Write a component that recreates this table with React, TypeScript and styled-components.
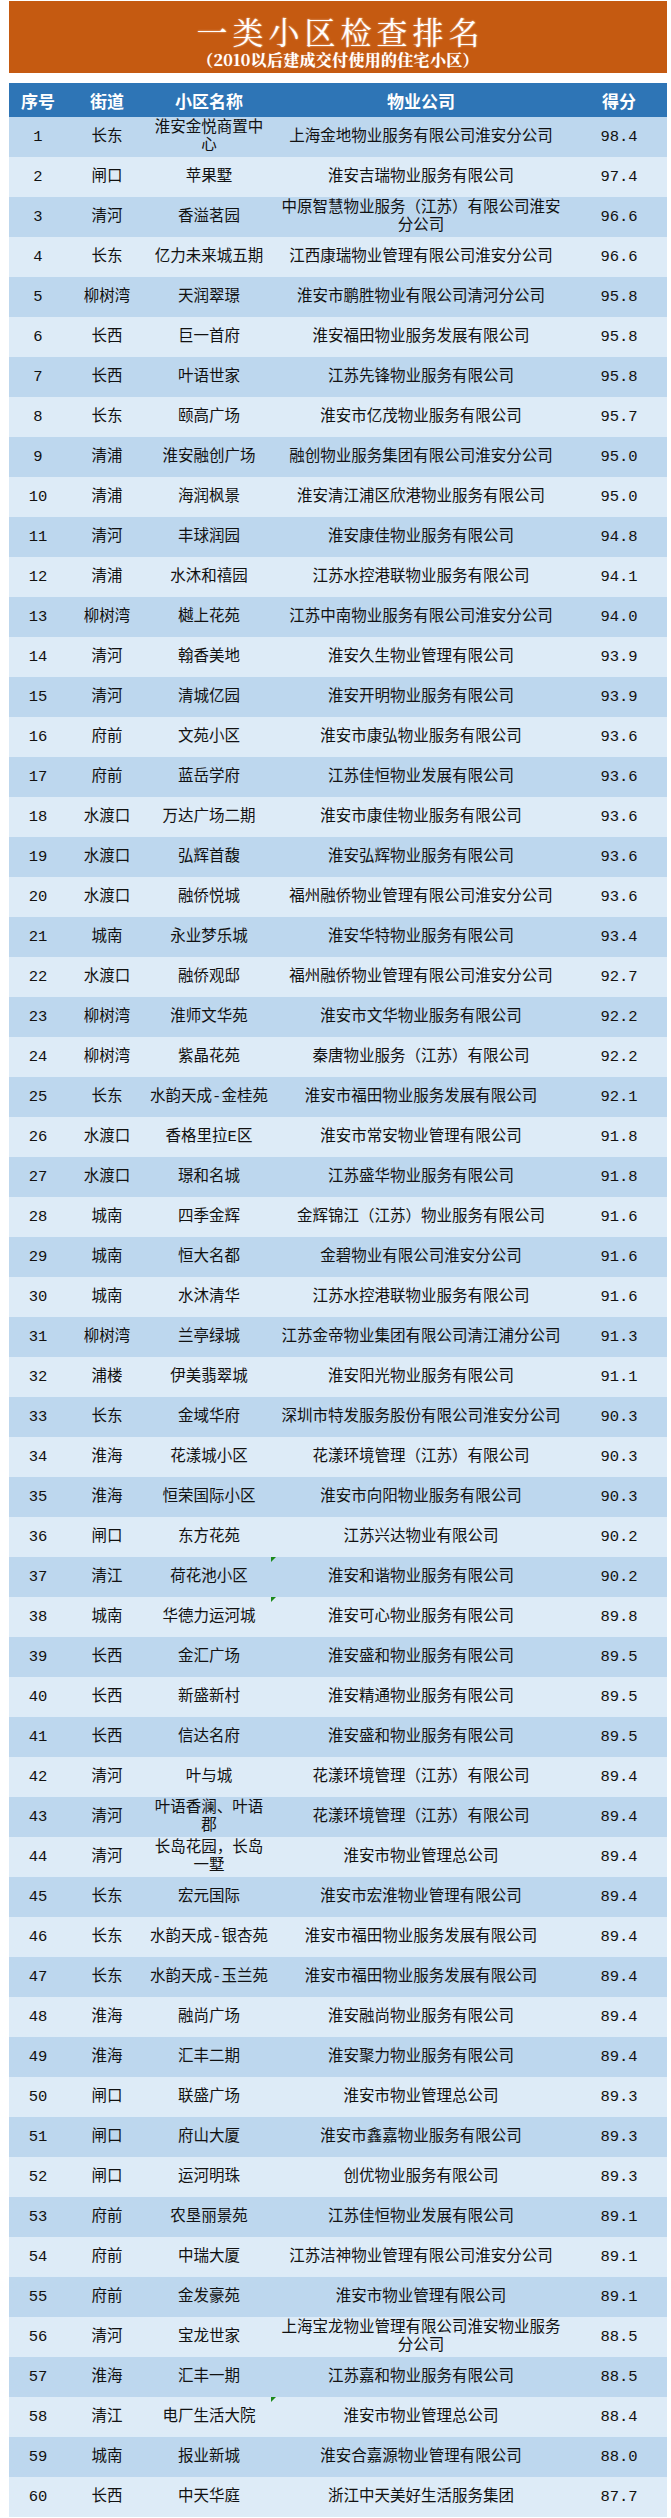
import { FC } from "react";
import styled, { createGlobalStyle } from "styled-components";

const GlobalStyle = createGlobalStyle`
  html, body {
    margin: 0;
    padding: 0;
    background: #fff;
  }
  body {
    font-family: "Noto Sans CJK SC", "Noto Sans", sans-serif;
  }
`;

type Item = [string, string, string, string, boolean?];

const rows: Item[] = [
  ["长东", "淮安金悦商置中心", "上海金地物业服务有限公司淮安分公司", "98.4"],
  ["闸口", "苹果墅", "淮安吉瑞物业服务有限公司", "97.4"],
  ["清河", "香溢茗园", "中原智慧物业服务（江苏）有限公司淮安分公司", "96.6"],
  ["长东", "亿力未来城五期", "江西康瑞物业管理有限公司淮安分公司", "96.6"],
  ["柳树湾", "天润翠璟", "淮安市鹏胜物业有限公司清河分公司", "95.8"],
  ["长西", "巨一首府", "淮安福田物业服务发展有限公司", "95.8"],
  ["长西", "叶语世家", "江苏先锋物业服务有限公司", "95.8"],
  ["长东", "颐高广场", "淮安市亿茂物业服务有限公司", "95.7"],
  ["清浦", "淮安融创广场", "融创物业服务集团有限公司淮安分公司", "95.0"],
  ["清浦", "海润枫景", "淮安清江浦区欣港物业服务有限公司", "95.0"],
  ["清河", "丰球润园", "淮安康佳物业服务有限公司", "94.8"],
  ["清浦", "水沐和禧园", "江苏水控港联物业服务有限公司", "94.1"],
  ["柳树湾", "樾上花苑", "江苏中南物业服务有限公司淮安分公司", "94.0"],
  ["清河", "翰香美地", "淮安久生物业管理有限公司", "93.9"],
  ["清河", "清城亿园", "淮安开明物业服务有限公司", "93.9"],
  ["府前", "文苑小区", "淮安市康弘物业服务有限公司", "93.6"],
  ["府前", "蓝岳学府", "江苏佳恒物业发展有限公司", "93.6"],
  ["水渡口", "万达广场二期", "淮安市康佳物业服务有限公司", "93.6"],
  ["水渡口", "弘辉首馥", "淮安弘辉物业服务有限公司", "93.6"],
  ["水渡口", "融侨悦城", "福州融侨物业管理有限公司淮安分公司", "93.6"],
  ["城南", "永业梦乐城", "淮安华特物业服务有限公司", "93.4"],
  ["水渡口", "融侨观邸", "福州融侨物业管理有限公司淮安分公司", "92.7"],
  ["柳树湾", "淮师文华苑", "淮安市文华物业服务有限公司", "92.2"],
  ["柳树湾", "紫晶花苑", "秦唐物业服务（江苏）有限公司", "92.2"],
  ["长东", "水韵天成-金桂苑", "淮安市福田物业服务发展有限公司", "92.1"],
  ["水渡口", "香格里拉E区", "淮安市常安物业管理有限公司", "91.8"],
  ["水渡口", "璟和名城", "江苏盛华物业服务有限公司", "91.8"],
  ["城南", "四季金辉", "金辉锦江（江苏）物业服务有限公司", "91.6"],
  ["城南", "恒大名都", "金碧物业有限公司淮安分公司", "91.6"],
  ["城南", "水沐清华", "江苏水控港联物业服务有限公司", "91.6"],
  ["柳树湾", "兰亭绿城", "江苏金帝物业集团有限公司清江浦分公司", "91.3"],
  ["浦楼", "伊美翡翠城", "淮安阳光物业服务有限公司", "91.1"],
  ["长东", "金域华府", "深圳市特发服务股份有限公司淮安分公司", "90.3"],
  ["淮海", "花漾城小区", "花漾环境管理（江苏）有限公司", "90.3"],
  ["淮海", "恒荣国际小区", "淮安市向阳物业服务有限公司", "90.3"],
  ["闸口", "东方花苑", "江苏兴达物业有限公司", "90.2"],
  ["清江", "荷花池小区", "淮安和谐物业服务有限公司", "90.2", true],
  ["城南", "华德力运河城", "淮安可心物业服务有限公司", "89.8", true],
  ["长西", "金汇广场", "淮安盛和物业服务有限公司", "89.5"],
  ["长西", "新盛新村", "淮安精通物业服务有限公司", "89.5"],
  ["长西", "信达名府", "淮安盛和物业服务有限公司", "89.5"],
  ["清河", "叶与城", "花漾环境管理（江苏）有限公司", "89.4"],
  ["清河", "叶语香澜、叶语郡", "花漾环境管理（江苏）有限公司", "89.4"],
  ["清河", "长岛花园，长岛一墅", "淮安市物业管理总公司", "89.4"],
  ["长东", "宏元国际", "淮安市宏淮物业管理有限公司", "89.4"],
  ["长东", "水韵天成-银杏苑", "淮安市福田物业服务发展有限公司", "89.4"],
  ["长东", "水韵天成-玉兰苑", "淮安市福田物业服务发展有限公司", "89.4"],
  ["淮海", "融尚广场", "淮安融尚物业服务有限公司", "89.4"],
  ["淮海", "汇丰二期", "淮安聚力物业服务有限公司", "89.4"],
  ["闸口", "联盛广场", "淮安市物业管理总公司", "89.3"],
  ["闸口", "府山大厦", "淮安市鑫嘉物业服务有限公司", "89.3"],
  ["闸口", "运河明珠", "创优物业服务有限公司", "89.3"],
  ["府前", "农垦丽景苑", "江苏佳恒物业发展有限公司", "89.1"],
  ["府前", "中瑞大厦", "江苏洁神物业管理有限公司淮安分公司", "89.1"],
  ["府前", "金发豪苑", "淮安市物业管理有限公司", "89.1"],
  ["清河", "宝龙世家", "上海宝龙物业管理有限公司淮安物业服务分公司", "88.5"],
  ["淮海", "汇丰一期", "江苏嘉和物业服务有限公司", "88.5"],
  ["清江", "电厂生活大院", "淮安市物业管理总公司", "88.4", true],
  ["城南", "报业新城", "淮安合嘉源物业管理有限公司", "88.0"],
  ["长西", "中天华庭", "浙江中天美好生活服务集团", "87.7"],
];

const Page = styled.div`
  padding: 1px 4px 0 9px;
  width: 658px;
`;

const Banner = styled.header`
  height: 72px;
  background: #c55a11;
  color: #fff;
  display: flex;
  flex-direction: column;
  align-items: center;
  margin-bottom: 10px;
`;

const Title = styled.h1`
  margin: 13px 0 0;
  font-family: "Noto Serif CJK SC", "Noto Sans CJK SC", serif;
  font-size: 31px;
  font-weight: 400;
  line-height: 34px;
  letter-spacing: 5px;
  padding-left: 5px;
  text-shadow: 0 0 2px rgba(255, 225, 205, 0.9);
`;

const Subtitle = styled.div`
  margin-top: 3px;
  font-family: "Noto Serif CJK SC", "Noto Sans CJK SC", serif;
  font-size: 16px;
  font-weight: 700;
  line-height: 18px;
  letter-spacing: 0.3px;
  text-shadow: 0 0 1px rgba(255, 225, 205, 0.8);
`;

const grid = `
  display: grid;
  grid-template-columns: 58px 80px 124px 300px 96px;
  align-items: stretch;
`;

const HeaderRow = styled.div`
  ${grid}
  height: 34px;
  background: #2e75b6;
  color: #fff;
  font-size: 17px;
  font-weight: 700;
`;

const Row = styled.div<{ $odd: boolean }>`
  ${grid}
  height: 40px;
  background: ${(p) => (p.$odd ? "#bdd7ee" : "#ddebf7")};
  color: #111;
  font-family: "Liberation Mono", "Noto Sans CJK SC", monospace;
  font-size: 15.5px;
  line-height: 18px;
`;

const Cell = styled.div<{ $flag?: boolean }>`
  position: relative;
  padding: 0 3px;
  display: flex;
  align-items: center;
  justify-content: center;
  text-align: center;

  &::before {
    content: "";
    display: ${(p) => (p.$flag ? "block" : "none")};
    position: absolute;
    top: 0;
    left: 0;
    border-top: 5px solid #1a8a1a;
    border-right: 5px solid transparent;
  }
`;

const columns = ["序号", "街道", "小区名称", "物业公司", "得分"];

const App: FC = () => {
  return (
    <Page>
      <GlobalStyle />
      <Banner>
        <Title>一类小区检查排名</Title>
        <Subtitle>（2010以后建成交付使用的住宅小区）</Subtitle>
      </Banner>
      <HeaderRow>
        {columns.map((c) => (
          <Cell key={c}>{c}</Cell>
        ))}
      </HeaderRow>
      {rows.map(([street, name, company, score, flag], i) => (
        <Row key={i} $odd={i % 2 === 0}>
          <Cell>{i + 1}</Cell>
          <Cell>{street}</Cell>
          <Cell>{name}</Cell>
          <Cell $flag={flag}>{company}</Cell>
          <Cell>{score}</Cell>
        </Row>
      ))}
    </Page>
  );
};

export default App;
